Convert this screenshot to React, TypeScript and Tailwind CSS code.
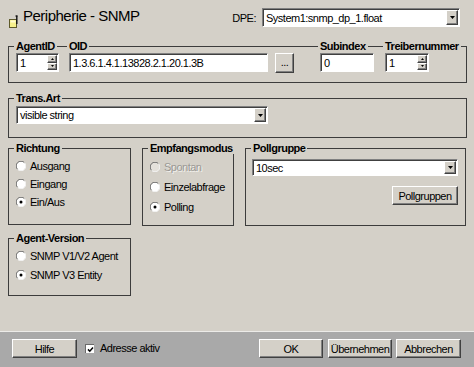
import React from "react";

const sunken =
  "bg-white border-t border-l border-t-[#808080] border-l-[#808080] border-b border-r border-b-white border-r-white shadow-[inset_1px_1px_0_#404040]";
const raised =
  "bg-[#d4d0c8] border-t border-l border-t-white border-l-white border-b border-r border-b-[#404040] border-r-[#404040] shadow-[inset_-1px_-1px_0_#808080]";

function TitleIcon() {
  return (
    <svg width="10" height="13" viewBox="0 0 10 13" className="shrink-0">
      <rect x="0.5" y="4.5" width="7" height="8" fill="#f6f08a" stroke="#5e5a2a" />
      <rect x="1.5" y="5.5" width="5" height="2" fill="#fffbd0" />
      <path d="M7.8 0.8 V9" stroke="#111" strokeWidth="1.4" />
      <path d="M6.5 1.2 L8.5 0.8" stroke="#111" strokeWidth="1.2" />
    </svg>
  );
}

function DownArrow() {
  return (
    <svg width="5" height="3" viewBox="0 0 5 3">
      <path d="M0 0 H5 L2.5 3 Z" fill="#000" />
    </svg>
  );
}

function Combo({ value, className }: { value: string; className: string }) {
  return (
    <div className={`${sunken} flex items-center ${className}`}>
      <span className="flex-1 pl-[3px] leading-[14px] truncate">{value}</span>
      <div className={`${raised} w-[12px] h-[calc(100%-2px)] mr-px flex items-center justify-center`}>
        <DownArrow />
      </div>
    </div>
  );
}

function Spin({ value, className }: { value: string; className: string }) {
  return (
    <div className={`${sunken} flex items-center ${className}`}>
      <span className="flex-1 pl-[3px] leading-[14px]">{value}</span>
      <div className="flex flex-col w-[10px] h-full mr-px py-px">
        <div className={`${raised} flex-1 flex items-center justify-center`}>
          <svg width="3" height="2" viewBox="0 0 3 2">
            <path d="M0 2 H3 L1.5 0 Z" fill="#000" />
          </svg>
        </div>
        <div className={`${raised} flex-1 flex items-center justify-center`}>
          <svg width="3" height="2" viewBox="0 0 3 2">
            <path d="M0 0 H3 L1.5 2 Z" fill="#000" />
          </svg>
        </div>
      </div>
    </div>
  );
}

function TextBox({ value, className }: { value: string; className: string }) {
  return (
    <div className={`${sunken} flex items-center ${className}`}>
      <span className="pl-[3px] leading-[14px]">{value}</span>
    </div>
  );
}

function Button({ label, className }: { label: string; className: string }) {
  return (
    <div className={`${raised} flex items-center justify-center leading-[14px] ${className}`}>
      {label}
    </div>
  );
}

function Radio({ checked, disabled }: { checked?: boolean; disabled?: boolean }) {
  return (
    <svg width="10" height="10" viewBox="0 0 10 10" className="shrink-0">
      <circle cx="5" cy="5" r="4.5" fill={disabled ? "#e4e1db" : "#fff"} />
      <path d="M1.6 8.4 A4.8 4.8 0 0 1 8.4 1.6" stroke="#6a6a6a" fill="none" />
      <path d="M8.4 1.6 A4.8 4.8 0 0 1 1.6 8.4" stroke="#f4f4f4" fill="none" />
      {checked ? <circle cx="5" cy="5" r="1.5" fill="#000" /> : null}
    </svg>
  );
}

function RadioRow({
  label,
  checked,
  disabled,
  className,
}: {
  label: string;
  checked?: boolean;
  disabled?: boolean;
  className: string;
}) {
  return (
    <div className={`flex items-center ${className}`}>
      <Radio checked={checked} disabled={disabled} />
      <span
        className={`ml-[4px] leading-[14px] whitespace-nowrap ${
          disabled ? "text-[#9a9894] [text-shadow:1px_1px_0_#f2f0ec]" : ""
        }`}
      >
        {label}
      </span>
    </div>
  );
}

function Legend({ children, className = "" }: { children: React.ReactNode; className?: string }) {
  return (
    <span
      className={`-mt-[7px] self-start bg-[#d4d0c8] px-[2px] font-bold leading-[12px] whitespace-nowrap ${className}`}
    >
      {children}
    </span>
  );
}

function Frame({
  label,
  className,
  children,
}: {
  label: string;
  className: string;
  children: React.ReactNode;
}) {
  return (
    <div className={`border border-[#3c3c3c] flex flex-col ${className}`}>
      <Legend className="ml-[5px]">{label}</Legend>
      {children}
    </div>
  );
}

export default function App() {
  return (
    <div className="w-[474px] h-[367px] bg-[#d4d0c8] flex flex-col overflow-hidden text-[11px] tracking-[-0.5px] text-black font-['Liberation_Sans',Arial,sans-serif]">
      {/* header */}
      <div className="h-[46px] flex items-start shrink-0">
        <div className="ml-[9px] mt-[15px]">
          <TitleIcon />
        </div>
        <span className="ml-[4px] mt-[6px] text-[15px] tracking-[-0.5px] leading-[20px]">
          Peripherie - SNMP
        </span>
        <div className="ml-auto mr-[14px] mt-[8px] flex items-center">
          <span className="leading-[14px]">DPE:</span>
          <Combo value="System1:snmp_dp_1.float" className="ml-[6px] w-[198px] h-[19px]" />
        </div>
      </div>

      {/* address */}
      <div className="ml-[8px] w-[459px] h-[37px] border border-[#3c3c3c] flex items-start shrink-0">
        <div className="ml-[7px] flex flex-col">
          <Legend className="-ml-[2px]">AgentID</Legend>
          <Spin value="1" className="mt-[1px] w-[43px] h-[19px]" />
        </div>
        <div className="ml-[10px] flex flex-col">
          <Legend className="-ml-[2px]">OID</Legend>
          <TextBox value="1.3.6.1.4.1.13828.2.1.20.1.3B" className="mt-[1px] w-[199px] h-[19px]" />
        </div>
        <Button label="..." className="ml-[7px] mt-[6px] w-[19px] h-[20px] pb-[3px]" />
        <div className="ml-[26px] flex flex-col">
          <Legend className="-ml-[2px]">Subindex</Legend>
          <TextBox value="0" className="mt-[1px] w-[54px] h-[19px]" />
        </div>
        <div className="ml-[11px] flex flex-col">
          <Legend className="-ml-[2px]">Treibernummer</Legend>
          <Spin value="1" className="mt-[1px] w-[44px] h-[19px]" />
        </div>
      </div>

      {/* Trans.Art */}
      <Frame label="Trans.Art" className="mt-[15px] ml-[8px] w-[459px] h-[40px] shrink-0">
        <Combo value="visible string" className="mt-[2px] ml-[7px] w-[252px] h-[18px]" />
      </Frame>

      {/* middle row */}
      <div className="mt-[10px] ml-[8px] flex items-start gap-[11px] shrink-0">
        <Frame label="Richtung" className="w-[123px] h-[77px]">
          <div className="mt-[3px] pl-[7px] flex flex-col">
            <RadioRow label="Ausgang" className="h-[18px]" />
            <RadioRow label="Eingang" className="h-[18px]" />
            <RadioRow label="Ein/Aus" checked className="h-[18px]" />
          </div>
        </Frame>
        <Frame label="Empfangsmodus" className="w-[92px] h-[78px]">
          <div className="mt-[3px] pl-[7px] flex flex-col">
            <RadioRow label="Spontan" disabled className="h-[20px]" />
            <RadioRow label="Einzelabfrage" className="h-[20px]" />
            <RadioRow label="Polling" checked className="h-[20px]" />
          </div>
        </Frame>
        <Frame label="Pollgruppe" className="w-[221px] h-[78px]">
          <Combo value="10sec" className="mt-[5px] ml-[6px] w-[206px] h-[17px]" />
          <Button label="Pollgruppen" className="mt-[10px] self-end mr-[7px] w-[66px] h-[19px]" />
        </Frame>
      </div>

      {/* Agent-Version */}
      <Frame label="Agent-Version" className="mt-[12px] ml-[8px] w-[123px] h-[58px] shrink-0">
        <div className="mt-[2px] pl-[7px] flex flex-col">
          <RadioRow label="SNMP V1/V2 Agent" className="h-[19px]" />
          <RadioRow label="SNMP V3 Entity" checked className="h-[19px]" />
        </div>
      </Frame>

      <div className="flex-1" />

      {/* bottom bar */}
      <div className="h-[36px] shrink-0 border-t border-t-[#ecebe8] bg-[#a9a9a9] flex items-start pt-[7px] pl-[12px] pr-[13px]">
        <Button label="Hilfe" className="w-[65px] h-[19px]" />
        <div className="ml-[8px] mt-[5px] w-[9px] h-[9px] bg-white border-t border-l border-t-[#6a6a6a] border-l-[#6a6a6a] flex items-center justify-center">
          <svg width="7" height="7" viewBox="0 0 7 7">
            <path d="M1 3.4 L2.8 5.2 L6 1.6" stroke="#000" strokeWidth="1.5" fill="none" />
          </svg>
        </div>
        <span className="ml-[6px] mt-[2px] leading-[14px]">Adresse aktiv</span>
        <Button label="OK" className="ml-auto w-[64px] h-[19px]" />
        <Button label="Übernehmen" className="ml-[5px] w-[64px] h-[19px]" />
        <Button label="Abbrechen" className="ml-[4px] w-[65px] h-[19px]" />
      </div>
    </div>
  );
}
